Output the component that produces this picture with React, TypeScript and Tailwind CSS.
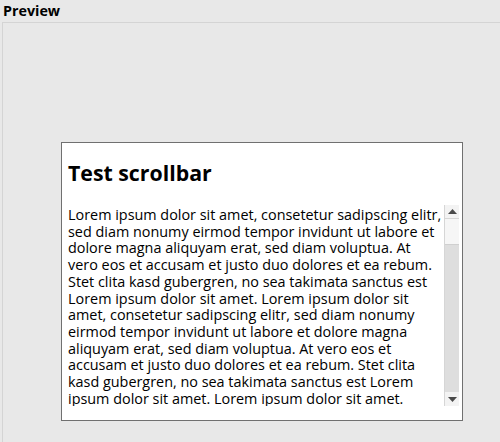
const lines = [
  "Lorem ipsum dolor sit amet, consetetur sadipscing elitr,",
  "sed diam nonumy eirmod tempor invidunt ut labore et",
  "dolore magna aliquyam erat, sed diam voluptua. At",
  "vero eos et accusam et justo duo dolores et ea rebum.",
  "Stet clita kasd gubergren, no sea takimata sanctus est",
  "Lorem ipsum dolor sit amet. Lorem ipsum dolor sit",
  "amet, consetetur sadipscing elitr, sed diam nonumy",
  "eirmod tempor invidunt ut labore et dolore magna",
  "aliquyam erat, sed diam voluptua. At vero eos et",
  "accusam et justo duo dolores et ea rebum. Stet clita",
  "kasd gubergren, no sea takimata sanctus est Lorem",
  "ipsum dolor sit amet. Lorem ipsum dolor sit amet.",
];

function Scrollbar() {
  return (
    <div className="w-[15px] flex flex-col border-l border-[#d6d6d6] bg-[#f3f3f3]">
      <div className="h-[14px] flex items-center justify-center border-b border-[#d6d6d6]">
        <svg width="9" height="5" viewBox="0 0 9 5">
          <path d="M0 5 L4.5 0 L9 5 Z" fill="#4a4a4a" />
        </svg>
      </div>
      <div className="h-[26px] bg-[#f6f6f6] border-b border-[#d0d0d0]" />
      <div className="flex-1 bg-[#dedede]" />
      <div className="h-[14px] flex items-center justify-center">
        <svg width="9" height="5" viewBox="0 0 9 5">
          <path d="M0 0 L9 0 L4.5 5 Z" fill="#4a4a4a" />
        </svg>
      </div>
    </div>
  );
}

export default function App() {
  return (
    <div className="w-[500px] h-[442px] bg-[#e8e8e8] flex flex-col font-['Open_Sans',sans-serif] text-black">
      <div className="px-[3px] pt-[1px] h-[22px] text-[14.3px] font-bold leading-[20px]">Preview</div>
      <div className="flex-1 ml-[2px] border-l border-t border-[#d4d4d4] pl-[58px] pt-[119px]">
        <div className="w-[402px] h-[279px] bg-white border border-[#707070] flex flex-col">
          <h1 className="pl-[6px] pt-[16px] h-[62px] text-[21.3px] font-bold leading-[28px]">Test scrollbar</h1>
          <div className="flex h-[201px] pr-[3px]">
            <div className="flex-1 overflow-hidden pl-[6px] pt-[2px] text-[14.4px] leading-[16.7px]">
              {lines.map((l) => (
                <div key={l} className="whitespace-nowrap">{l}</div>
              ))}
            </div>
            <Scrollbar />
          </div>
        </div>
      </div>
    </div>
  );
}
